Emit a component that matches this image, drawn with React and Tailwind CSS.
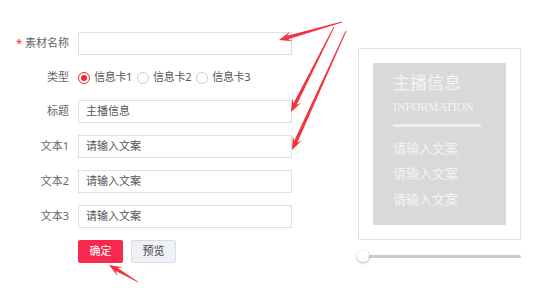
import React from "react";

const FONT = { fontFamily: '"Noto Sans", "Noto Sans CJK SC", sans-serif' };

// tapered arrow polygon from tail to tip
function arrowPoints(tx, ty, px, py) {
    let dx = px - tx;
    let dy = py - ty;
    let len = Math.sqrt(dx * dx + dy * dy);
    let ux = dx / len;
    let uy = dy / len;
    let nx = -uy;
    let ny = ux;
    let headLen = 13;
    let bx = px - ux * headLen;
    let by = py - uy * headLen;
    let nbx = px - ux * (headLen - 4);
    let nby = py - uy * (headLen - 4);
    let pts = [
        [tx + nx * 0.4, ty + ny * 0.4],
        [nbx + nx * 1.8, nby + ny * 1.8],
        [bx + nx * 5, by + ny * 5],
        [px, py],
        [bx - nx * 5, by - ny * 5],
        [nbx - nx * 1.8, nby - ny * 1.8],
        [tx - nx * 0.4, ty - ny * 0.4],
    ];
    return pts.map((p) => p[0].toFixed(1) + "," + p[1].toFixed(1)).join(" ");
}

function Label({ children, required }) {
    return (
        <div className="w-[69px] shrink-0 text-right text-[11px] text-[#666]">
            {required ? <span className="text-[#f5222d] mr-[3px]">*</span> : null}
            {children}
        </div>
    );
}

function InputRow({ label, value, required }) {
    return (
        <div className="flex flex-row items-center gap-[9px]">
            <Label required={required}>{label}</Label>
            <div className="w-[214px] h-[23px] border border-[#dcdfe6] bg-white flex items-center pl-[7px] text-[11px] text-[#555]">
                {value}
            </div>
        </div>
    );
}

function Radio({ checked, text }) {
    return (
        <div className="flex flex-row items-center mr-[5px]">
            {checked ? (
                <div className="w-[12px] h-[12px] rounded-full border border-[#f5222d] flex items-center justify-center">
                    <div className="w-[6px] h-[6px] rounded-full bg-[#f5222d]"></div>
                </div>
            ) : (
                <div className="w-[12px] h-[12px] rounded-full border border-[#c9ccd3] bg-white"></div>
            )}
            <span className="ml-[4px] text-[11px] text-[#555] tracking-[-0.3px]">{text}</span>
        </div>
    );
}

export default function App() {
    let arrows = [
        [342, 22, 279, 40],
        [334, 27, 291, 112],
        [346, 31, 292, 150],
        [138, 282, 109, 265],
    ];

    return (
        <div className="w-[534px] h-[302px] bg-white relative overflow-hidden" style={FONT}>
            <div className="flex flex-row">
                <div className="w-[292px] pt-[32px] flex flex-col gap-3">
                    <InputRow label="素材名称" value="" required />
                    <div className="flex flex-row items-center gap-[9px] h-[21px]">
                        <Label>类型</Label>
                        <div className="flex flex-row items-center">
                            <Radio checked text="信息卡1" />
                            <Radio text="信息卡2" />
                            <Radio text="信息卡3" />
                        </div>
                    </div>
                    <InputRow label="标题" value="主播信息" />
                    <InputRow label="文本1" value="请输入文案" />
                    <InputRow label="文本2" value="请输入文案" />
                    <InputRow label="文本3" value="请输入文案" />
                    <div className="flex flex-row gap-2 pl-[78px]">
                        <div className="w-[45px] h-[23px] bg-[#f7284e] rounded-[2px] text-white text-[11px] flex items-center justify-center">
                            确定
                        </div>
                        <div className="w-[45px] h-[23px] bg-[#eef1f5] border border-[#d8dce3] rounded-[2px] text-[#444] text-[11px] flex items-center justify-center">
                            预览
                        </div>
                    </div>
                </div>

                <div className="ml-[66px] w-[163px] pt-[48px] flex flex-col">
                    <div className="h-[192px] border border-[#e4e4e4] p-[14px]">
                        <div className="h-full bg-[#d9d9d9] pl-[20px] pt-[9px] flex flex-col text-[#f4f4f4]">
                            <div className="text-[17px] leading-[22px]">主播信息</div>
                            <div
                                className="text-[12px] leading-[14px] mt-[6px] tracking-[-0.2px]"
                                style={{ fontFamily: '"Liberation Serif", serif' }}
                            >
                                INFORMATION
                            </div>
                            <div className="w-[88px] h-[3px] bg-[#ededed] mt-[10px]"></div>
                            <div className="text-[13px] leading-[18px] mt-[12px]">请输入文案</div>
                            <div className="text-[13px] leading-[18px] mt-[7px]">请输入文案</div>
                            <div className="text-[13px] leading-[18px] mt-[8px]">请输入文案</div>
                        </div>
                    </div>
                    <div className="relative mt-[14px] h-[4px] flex items-center">
                        <div className="w-full h-[3px] bg-[#c9ccd3] rounded-full"></div>
                        <div className="absolute left-[-1px] top-[-4px] w-[12px] h-[12px] rounded-full bg-white shadow-[0_1px_3px_rgba(0,0,0,0.3)]"></div>
                    </div>
                </div>
            </div>

            <svg className="absolute inset-0 pointer-events-none" width="534" height="302">
                {arrows.map((a, i) => (
                    <polygon key={i} points={arrowPoints(a[0], a[1], a[2], a[3])} fill="#f5333f" />
                ))}
            </svg>
        </div>
    );
}
